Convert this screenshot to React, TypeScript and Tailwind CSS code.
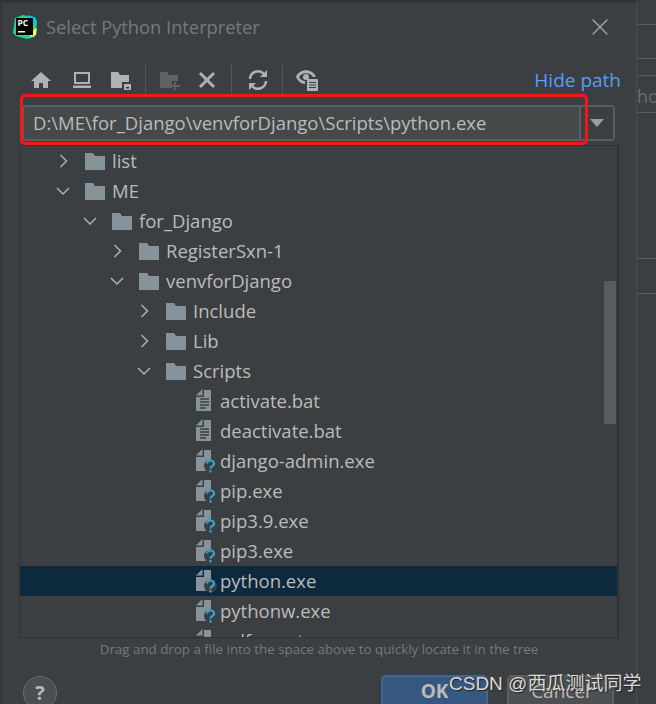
import { X } from "lucide-react";

const font = "font-['Open_Sans','Noto_Sans',sans-serif]";

type Row = {
  name: string;
  depth: number;
  kind: "open" | "closed" | "bat" | "exe";
  selected?: boolean;
};

const rows: Row[] = [
  { name: "list", depth: 0, kind: "closed" },
  { name: "ME", depth: 0, kind: "open" },
  { name: "for_Django", depth: 1, kind: "open" },
  { name: "RegisterSxn-1", depth: 2, kind: "closed" },
  { name: "venvforDjango", depth: 2, kind: "open" },
  { name: "Include", depth: 3, kind: "closed" },
  { name: "Lib", depth: 3, kind: "closed" },
  { name: "Scripts", depth: 3, kind: "open" },
  { name: "activate.bat", depth: 4, kind: "bat" },
  { name: "deactivate.bat", depth: 4, kind: "bat" },
  { name: "django-admin.exe", depth: 4, kind: "exe" },
  { name: "pip.exe", depth: 4, kind: "exe" },
  { name: "pip3.9.exe", depth: 4, kind: "exe" },
  { name: "pip3.exe", depth: 4, kind: "exe" },
  { name: "python.exe", depth: 4, kind: "exe", selected: true },
  { name: "pythonw.exe", depth: 4, kind: "exe" },
  { name: "sqlformat.exe", depth: 4, kind: "exe" },
];

function FolderIcon() {
  return (
    <svg width="22" height="20" viewBox="0 0 22 20" className="shrink-0">
      <path d="M1 2h8l2 3h10v14H1z" fill="#87939a" />
    </svg>
  );
}

function FileIcon({ kind }: { kind: "bat" | "exe" }) {
  return (
    <svg width="22" height="24" viewBox="0 0 22 24" className="ml-[4px] shrink-0">
      <path d="M8 1h7v21H0V8h8z" fill="#87939a" />
      <path d="M0 6.500 6.500 0V6.500z" fill="#87939a" />
      {kind === "bat" && <path d="M4 10h9M4 13h9M4 16h9M4 19h6" stroke="#3c3f41" strokeWidth="1.300" />}
      {kind === "exe" && <circle cx="14.500" cy="17" r="6.500" fill="#3c3f41" />}
      {kind === "exe" && (
        <path d="M11 14.500a3.500 3 0 1 1 5 2.700c-1.300.7-1.500 1.300-1.500 2.500M14.500 21v2.500" fill="none" stroke="#32a8d8" strokeWidth="2" />
      )}
    </svg>
  );
}

function Chevron({ open }: { open: boolean }) {
  if (open) {
    return (
      <svg width="14" height="8" viewBox="0 0 14 8" className="-ml-[2px]">
        <path d="M1 1l6 6 6-6" fill="none" stroke="#a9b0b5" strokeWidth="1.500" />
      </svg>
    );
  }
  return (
    <svg width="9" height="14" viewBox="0 0 9 14" className="ml-[1px]">
      <path d="M1.500 1l6 6-6 6" fill="none" stroke="#a9b0b5" strokeWidth="1.500" />
    </svg>
  );
}

function TreeRow({ row }: { row: Row }) {
  const left = [38, 65, 92, 119, 146][row.depth];
  const isFolder = row.kind === "open" || row.kind === "closed";
  return (
    <div className={`flex h-[30px] shrink-0 items-center ${row.selected ? "bg-[#0d293e]" : ""}`}>
      <div style={{ width: left }} className="shrink-0" />
      <div className="flex w-[26px] shrink-0 items-center justify-start">
        {isFolder && <Chevron open={row.kind === "open"} />}
      </div>
      {row.kind === "open" || row.kind === "closed" ? <FolderIcon /> : <FileIcon kind={row.kind} />}
      <span className={`${isFolder ? "ml-[6px]" : "ml-[2px]"} text-[18.5px] leading-none whitespace-nowrap text-[#bbbbbb]`}>
        {row.name}
      </span>
    </div>
  );
}

function Toolbar() {
  return (
    <div className="flex h-[30px] items-center pl-[28px]">
      <svg width="22" height="20" viewBox="0 0 22 20" className="mr-[20px]">
        <path d="M11 2 1 11h3v7h5v-5h4v5h5v-7h3z" fill="#afb1b3" />
      </svg>
      <svg width="20" height="20" viewBox="0 0 20 20" className="mr-[18px]">
        <path d="M2 2h16v12H2zM4 4v8h12V4zM1 15.500h18V18H1z" fill="#afb1b3" fillRule="evenodd" />
      </svg>
      <svg width="22" height="22" viewBox="0 0 22 22" className="mr-[13px]">
        <path d="M1 3h7l2 3h9v7h-7v6H1z" fill="#afb1b3" />
        <path d="M14 15h7v6h-7z" fill="#afb1b3" />
        <path d="M16 18h3v1.500h-3z" fill="#3c3f41" />
      </svg>
      <div className="mr-[13px] h-[30px] w-px bg-[#515658]" />
      <svg width="22" height="22" viewBox="0 0 22 22" className="mr-[17px]">
        <path d="M1 3h7l2 3h9v6h-6v7H1z" fill="#5f6263" />
        <path d="M17 13v3h4v2h-4v3h-2v-3h-3v-2h3v-3z" fill="#5f6263" />
      </svg>
      <svg width="18" height="18" viewBox="0 0 18 18" className="mr-[15px]">
        <path d="M2 2l14 14M16 2 2 16" stroke="#afb1b3" strokeWidth="3" />
      </svg>
      <div className="mr-[15px] h-[30px] w-px bg-[#515658]" />
      <svg width="22" height="22" viewBox="0 0 22 22" className="mr-[13px]">
        <path d="M3 10a8 8 0 0 1 14-5M19 12a8 8 0 0 1-14 5" fill="none" stroke="#afb1b3" strokeWidth="2.500" />
        <path d="M20 1v7h-7zM2 21v-7h7z" fill="#afb1b3" />
      </svg>
      <div className="mr-[12px] h-[30px] w-px bg-[#515658]" />
      <svg width="24" height="24" viewBox="0 0 24 24">
        <path d="M1 9c3-9 17-9 20 0h-3c-3-5-11-5-14 0 1 2 3 4 6 4v3C6 16 3 13 1 9z" fill="#afb1b3" />
        <circle cx="11" cy="9" r="3" fill="#afb1b3" />
        <path d="M12 11h11v12H12z" fill="#afb1b3" />
        <path d="M14 14.500h7M14 17h7M14 19.500h7" stroke="#3c3f41" strokeWidth="1.200" />
      </svg>
      <a className="mr-[15px] ml-auto text-[19px] leading-none text-[#589df6]">Hide path</a>
    </div>
  );
}

export default function App() {
  return (
    <div className={`relative flex h-[704px] w-[656px] overflow-hidden bg-[#3c3f41] ${font}`}>
      <div className="w-[2px] shrink-0 bg-[#35373a]" />
      <div className="flex w-[635px] shrink-0 flex-col border-t-[3px] border-r border-t-[#323436] border-r-[#4a4d4f] bg-[#3c3f41]">
        <div className="flex h-[48px] shrink-0 items-center pr-[22px] pl-[10px]">
          <svg width="26" height="26" viewBox="0 0 26 26" className="mr-[8px]">
            <path d="M3 4 11 1l12 3 2 4-2 15-8 2-11-3-3-3z" fill="#21d789" />
            <path d="M15 1l8 2 2 5-4 3z" fill="#07c3f2" />
            <path d="M18 23l6-2 1-7-6 3z" fill="#fcf84a" />
            <path d="M4 4h17v17H4z" fill="#000" />
            <text x="5.500" y="12" fill="#fff" fontSize="8.500" fontWeight="700">PC</text>
            <path d="M6 17h7v1.500H6z" fill="#fff" />
          </svg>
          <span className="text-[18.3px] leading-none text-[#787878]">Select Python Interpreter</span>
          <X size={28} strokeWidth={1.300} className="ml-auto text-[#9a9c9e]" />
        </div>
        <div className="mt-[14px]">
          <Toolbar />
        </div>
        <div className="mt-[10px] ml-[20px] flex h-[36px] w-[593px] shrink-0 items-center rounded-[4px] border-2 border-[#5a5e60] bg-[#45494a]">
          <span className="ml-[9px] flex-1 text-[18.5px] leading-none whitespace-nowrap text-[#bbbbbb]">
            D:\ME\for_Django\venvforDjango\Scripts\python.exe
          </span>
          <div className="flex h-full w-[34px] items-center justify-center border-l-2 border-[#5a5e60] bg-[#3c3f41]">
            <div className="h-0 w-0 border-x-[7px] border-t-[8px] border-x-transparent border-t-[#9a9c9e]" />
          </div>
        </div>
        <div className="relative mt-[4px] ml-[17px] h-[493px] w-[600px] shrink-0 overflow-hidden border border-r-2 border-[#2f3133]">
          <div className="flex flex-col">
            {rows.map((r) => (
              <TreeRow key={r.name} row={r} />
            ))}
          </div>
          <div className="absolute top-[135px] right-[1px] h-[143px] w-[12px] bg-[#595b5d]" />
        </div>
        <div className="mt-[2px] ml-[17px] w-[600px] text-center text-[13.35px] leading-[18px] text-[#787878]">
          Drag and drop a file into the space above to quickly locate it in the tree
        </div>
        <div className="relative mt-[17px] flex h-[40px] shrink-0 pl-[21px]">
          <div className="mt-[1px] flex h-[34px] w-[34px] items-center justify-center rounded-full border border-[#6b6e70] bg-[#4b4f51] text-[20px] font-bold text-[#bbbbbb]">
            ?
          </div>
          <div className="ml-[324px] flex h-[40px] w-[107px] items-center justify-center rounded-[5px] border-2 border-[#42668f] bg-[#365880] pb-[8px] text-[19px] font-bold text-[#bbbbbb]">
            OK
          </div>
          <div className="ml-[19px] flex h-[40px] w-[107px] items-center justify-center rounded-[5px] border-2 border-[#5e6060] bg-[#4c5052] pb-[8px] text-[19px] text-[#bbbbbb]">
            Cancel
          </div>
        </div>
      </div>
      <div className="flex flex-1 flex-col bg-[#3c3f41]">
        <div className="mt-[24px] h-px bg-[#5a5c5e]" />
        <div className="mt-[33px] h-px bg-[#5a5c5e]" />
        <div className="mt-[16px] h-px bg-[#5a5c5e]" />
        <div className="mt-[8px] text-[18px] leading-[24px] text-[#6a6c6e]">hon</div>
        <div className="mt-[4px] h-px bg-[#5a5c5e]" />
        <div className="mt-[145px] h-px bg-[#5a5c5e]" />
        <div className="mt-[34px] h-px bg-[#5a5c5e]" />
      </div>
      {/* red mark and watermark sit on top of the shot */}
      <div className="absolute top-[94px] left-[20px] h-[51px] w-[568px] rounded-[5px] border-[3px] border-[#f01a12]" />
      <div className="absolute top-[670px] left-[449px] font-['Liberation_Sans','Noto_Sans_CJK_SC',sans-serif] text-[19px] leading-[28px] whitespace-nowrap text-[#d9d9d9] [text-shadow:1px_1px_1px_#222]">
        CSDN @西瓜测试同学
      </div>
    </div>
  );
}
